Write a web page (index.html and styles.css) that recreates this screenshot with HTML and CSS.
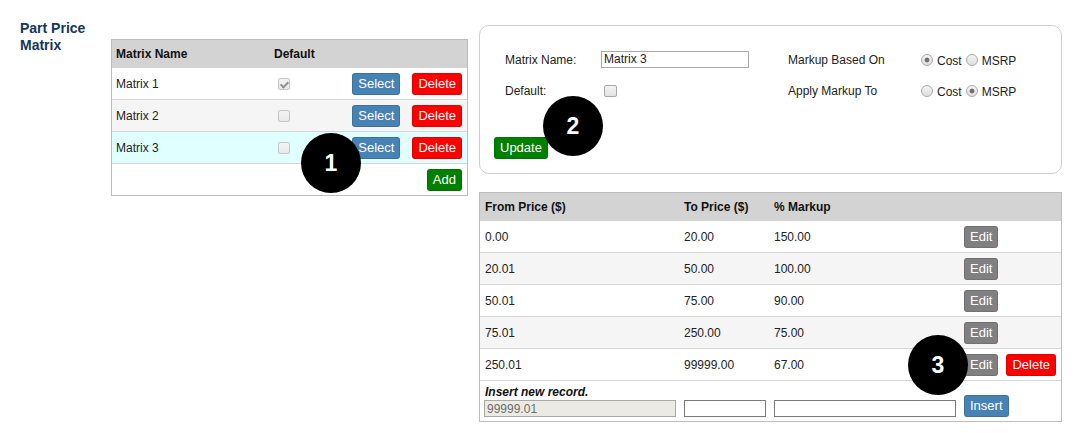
FILE: index.html
```html
<!DOCTYPE html>
<html lang="en">
<head>
<meta charset="utf-8">
<title>Part Price Matrix</title>
<link rel="stylesheet" href="styles.css">
</head>
<body>
<div class="page">
  <h2 class="title">Part Price<br>Matrix</h2>

  <table class="mtx">
    <colgroup><col class="mc-name"><col class="mc-def"><col class="mc-act"></colgroup>
    <thead>
      <tr><th>Matrix Name</th><th>Default</th><th></th></tr>
    </thead>
    <tbody>
      <tr>
        <td>Matrix 1</td>
        <td><input type="checkbox" class="cb cb-dis" checked disabled></td>
        <td><div class="acts"><button class="btn blue">Select</button><button class="btn red">Delete</button></div></td>
      </tr>
      <tr class="alt">
        <td>Matrix 2</td>
        <td><input type="checkbox" class="cb cb-dis" disabled></td>
        <td><div class="acts"><button class="btn blue">Select</button><button class="btn red">Delete</button></div></td>
      </tr>
      <tr class="sel">
        <td>Matrix 3</td>
        <td><input type="checkbox" class="cb cb-dis" disabled></td>
        <td><div class="acts"><button class="btn blue">Select</button><button class="btn red">Delete</button></div></td>
      </tr>
      <tr class="last">
        <td></td>
        <td></td>
        <td><div class="acts"><button class="btn green">Add</button></div></td>
      </tr>
    </tbody>
  </table>

  <div class="right">
    <div class="card">
      <div class="form">
        <span class="lbl">Matrix Name:</span>
        <input type="text" class="txt" value="Matrix 3">
        <span class="lbl">Markup Based On</span>
        <div class="radios">
          <input type="radio" class="rd" name="based" checked><span class="rtxt">Cost</span>
          <input type="radio" class="rd" name="based"><span class="rtxt">MSRP</span>
        </div>

        <span class="lbl">Default:</span>
        <div><input type="checkbox" class="cb cb-card"></div>
        <span class="lbl">Apply Markup To</span>
        <div class="radios">
          <input type="radio" class="rd" name="apply"><span class="rtxt">Cost</span>
          <input type="radio" class="rd" name="apply" checked><span class="rtxt">MSRP</span>
        </div>
      </div>
      <button class="btn green">Update</button>
    </div>

    <table class="ranges">
      <colgroup><col class="rc1"><col class="rc2"><col class="rc3"><col class="rc4"></colgroup>
      <thead>
        <tr><th>From Price ($)</th><th>To Price ($)</th><th>% Markup</th><th></th></tr>
      </thead>
      <tbody>
        <tr><td>0.00</td><td>20.00</td><td>150.00</td><td><div class="acts-l"><button class="btn gray">Edit</button></div></td></tr>
        <tr class="alt"><td>20.01</td><td>50.00</td><td>100.00</td><td><div class="acts-l"><button class="btn gray">Edit</button></div></td></tr>
        <tr><td>50.01</td><td>75.00</td><td>90.00</td><td><div class="acts-l"><button class="btn gray">Edit</button></div></td></tr>
        <tr class="alt"><td>75.01</td><td>250.00</td><td>75.00</td><td><div class="acts-l"><button class="btn gray">Edit</button></div></td></tr>
        <tr><td>250.01</td><td>99999.00</td><td>67.00</td><td><div class="acts-l"><button class="btn gray">Edit</button><button class="btn red">Delete</button></div></td></tr>
        <tr class="ins last">
          <td><div class="ins-lbl">Insert new record.</div><input type="text" class="txt in1" value="99999.01" disabled></td>
          <td><input type="text" class="txt in2"></td>
          <td><input type="text" class="txt in3"></td>
          <td><button class="btn blue ins-btn">Insert</button></td>
        </tr>
      </tbody>
    </table>
  </div>

  <div class="badge b1">1</div>
  <div class="badge b2">2</div>
  <div class="badge b3">3</div>
</div>
</body>
</html>
```

FILE: styles.css
```css
* { box-sizing: border-box; }

html, body {
  margin: 0;
  padding: 0;
  background: #fff;
}

body {
  font-family: "Liberation Sans", Arial, sans-serif;
  font-size: 12px;
  color: #222;
}

.page {
  position: relative;
  display: flex;
  align-items: flex-start;
  padding: 20px 0 0 20px;
  width: 1079px;
  height: 433px;
}

.title {
  margin: 0;
  width: 91px;
  flex: none;
  font-size: 14px;
  line-height: 17px;
  font-weight: bold;
  color: #14365a;
}

/* generic tables */
table {
  border-collapse: separate;
  border-spacing: 0;
  table-layout: fixed;
  border: 1px solid #bdbdbd;
  font-size: 12px;
}

th {
  height: 28px;
  padding: 0 0 0 4px;
  background: #d3d3d3;
  text-align: left;
  font-weight: bold;
  color: #111;
  vertical-align: middle;
}

td {
  height: 32px;
  padding: 0 0 0 4px;
  vertical-align: middle;
  border-bottom: 1px solid #d6d6d6;
}

tr.last td { border-bottom: none; height: 31px; }

tr.alt td { background: #f5f5f5; }
tr.sel td { background: #e0ffff; }

/* left matrix table */
.mtx {
  width: 357px;
  margin-top: 19px;
  flex: none;
}
.mc-name { width: 158px; }
.mc-def { width: 76px; }
.mc-act { width: 121px; }

.acts {
  display: flex;
  justify-content: flex-end;
  gap: 12px;
  padding-right: 5px;
}

/* buttons */
.btn {
  display: block;
  height: 22px;
  padding: 0 5px;
  border: 1px solid rgba(0, 0, 0, 0.12);
  border-radius: 3px;
  font-family: "Liberation Sans", Arial, sans-serif;
  font-size: 13px;
  line-height: 20px;
  color: #fff;
  cursor: pointer;
}
.blue { background: #4682b4; }
.red { background: #ff0000; }
.green { background: #008000; }
.gray { background: #808080; }

/* checkbox */
.cb {
  appearance: none;
  -webkit-appearance: none;
  display: block;
  width: 12px;
  height: 12px;
  margin: 0 0 0 4px;
  border: 1px solid #a8a8a8;
  border-radius: 2px;
  background: linear-gradient(#f4f4f4, #e2e2e2);
}
.cb-dis {
  border-color: #c4c4c4;
  background: linear-gradient(#f3f3f3, #e9e9e9);
}
.cb:checked::after {
  content: "";
  display: block;
  width: 3px;
  height: 6px;
  margin: 1px 0 0 3px;
  border: solid #8f8f8f;
  border-width: 0 2px 2px 0;
  transform: rotate(45deg);
}
.cb-card {
  margin-left: 3px;
  width: 13px;
}

/* right column */
.right {
  width: 583px;
  margin-left: 11px;
  margin-top: 5px;
  flex: none;
}

.card {
  display: flex;
  flex-direction: column;
  align-items: flex-start;
  height: 149px;
  padding: 18px 14px 0 14px;
  border: 1px solid #cfcfcf;
  border-radius: 10px;
}

.form {
  display: grid;
  grid-template-columns: 96px 187px 133px auto;
  grid-auto-rows: 31px;
  align-items: center;
  margin-left: 11px;
}

.lbl {
  color: #222;
}

.txt {
  display: block;
  height: 17px;
  padding: 0 2px;
  border: 1px solid #a9a9a9;
  font-family: "Liberation Sans", Arial, sans-serif;
  font-size: 12px;
  color: #222;
  background: #fff;
}
.form .txt { width: 148px; margin-top: -1px; }

.radios {
  display: flex;
  align-items: center;
}
.rd {
  appearance: none;
  -webkit-appearance: none;
  width: 12px;
  height: 12px;
  margin: 0 4px 0 0;
  border: 1px solid #a9a9a9;
  border-radius: 50%;
  background: linear-gradient(#f4f4f4, #dedede);
}
.rd:checked {
  background: radial-gradient(circle, #707070 0, #707070 2px, rgba(112,112,112,0) 2.8px), linear-gradient(#f4f4f4, #dedede);
}
.rtxt {
  padding-top: 3px;
  margin-right: 4px;
}

.card .btn.green {
  margin-top: 31px;
}

/* ranges table */
.ranges {
  width: 583px;
  margin-top: 18px;
}
.ranges th, .ranges td { padding-left: 5px; }
.rc1 { width: 199px; }
.rc2 { width: 90px; }
.rc3 { width: 190px; }
.rc4 { width: 102px; }

.acts-l {
  display: flex;
  gap: 8px;
}

tr.ins td {
  height: 40px;
  vertical-align: bottom;
  padding-top: 4px;
  padding-bottom: 4px;
}
.ins-lbl {
  font-weight: bold;
  font-style: italic;
  line-height: 15px;
  color: #111;
}
.in1 {
  width: 192px;
  margin-left: -1px;
  background: #ebebe4;
  color: #6d6d6d;
  border-color: #a9a9a9;
}
.in2 { width: 82px; border-color: #7a7a7a; }
.in3 { width: 182px; border-color: #7a7a7a; }

/* annotation badges */
.badge {
  position: absolute;
  width: 60px;
  height: 60px;
  border-radius: 50%;
  background: #000;
  color: #fff;
  font-family: "Liberation Sans", Arial, sans-serif;
  font-weight: bold;
  font-size: 23px;
  display: flex;
  align-items: center;
  justify-content: center;
}
.b1 { left: 301px; top: 133px; }
.b2 { left: 543px; top: 96px; }
.b3 { left: 908px; top: 335px; }
```
